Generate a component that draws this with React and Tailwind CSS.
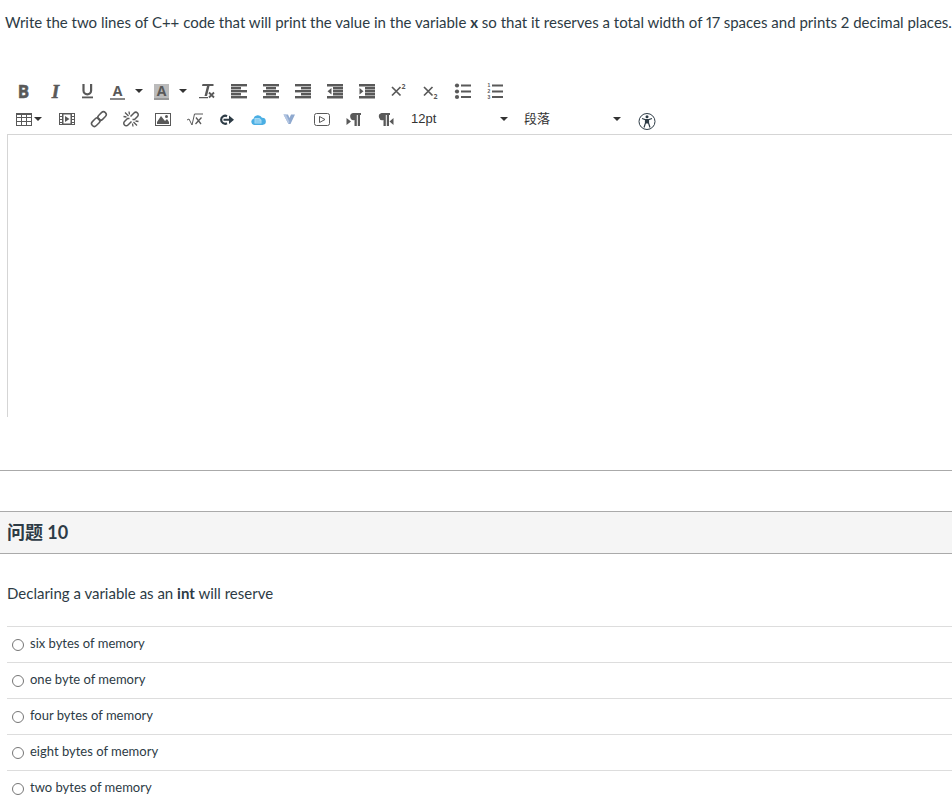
import React, { useState } from 'react';

const answers = [
    'six bytes of memory',
    'one byte of memory',
    'four bytes of memory',
    'eight bytes of memory',
    'two bytes of memory'
];

function Icon({ children }) {
    return (
        <svg viewBox="0 0 16 16" width="16" height="16" fill="#595959" className="shrink-0 overflow-visible" aria-hidden="true">
            {children}
        </svg>
    );
}

function ToolButton({ label, children, width = 'w-8' }) {
    return (
        <button type="button" aria-label={label} title={label} className={`${width} h-7 flex items-center justify-center shrink-0`}>
            {children}
        </button>
    );
}

function Caret() {
    return (
        <svg viewBox="0 0 8 4" width="8" height="4" fill="#333" className="shrink-0" aria-hidden="true">
            <path d="M0 0h8L4 4z" />
        </svg>
    );
}

function ToolSelect({ label, options }) {
    return (
        <div className="relative w-[113px] h-7 shrink-0">
            <select aria-label={label} className="appearance-none w-full h-7 pl-2 text-[13px] text-[#333] bg-transparent font-['Liberation_Sans','Noto_Sans_CJK_SC',sans-serif]">
                {options.map((o) => <option key={o}>{o}</option>)}
            </select>
            <span className="absolute right-2 inset-y-0 flex items-center pointer-events-none"><Caret /></span>
        </div>
    );
}

// each row is [x, width]
function Align({ rows }) {
    return (
        <Icon>
            {rows.map(([x, w], i) => <rect key={i} x={x} y={1 + i * 3} width={w} height="2.4" />)}
        </Icon>
    );
}

function Indent({ arrow }) {
    return (
        <Icon>
            <path d="M0 1h16v2.400H0zM6 4h10v2.400H6zM6 7h10v2.400H6zM6 10h10v2.400H6zM0 13h16v2.400H0z" />
            <path d={arrow} />
        </Icon>
    );
}

function Letter({ children, size = 16, font = 'Open Sans', style = 'normal', x = 8, y = 14 }) {
    return (
        <text x={x} y={y} textAnchor="middle" fontFamily={`'${font}', sans-serif`} fontWeight="700" fontStyle={style} fontSize={size}>{children}</text>
    );
}

function FirstRow() {
    return (
        <div className="flex">
            <ToolButton label="Bold"><Icon><g stroke="#595959" strokeWidth="0.5"><Letter size={17} x={8.5} y={14.5}>B</Letter></g></Icon></ToolButton>
            <ToolButton label="Italic"><Icon><g stroke="#595959" strokeWidth="0.5"><Letter size={19} font="Liberation Serif" style="italic" x={8.5} y={14.5}>I</Letter></g></Icon></ToolButton>
            <ToolButton label="Underline">
                <Icon>
                    <path d="M4.500 1v6.500a3.800 3.800 0 0 0 7.600 0V1" fill="none" stroke="#595959" strokeWidth="2.2" />
                    <rect x="3" y="13.500" width="11" height="1.800" />
                </Icon>
            </ToolButton>
            <ToolButton label="Text color" width="w-7">
                <Icon>
                    <Letter size={14} x={8.5} y={13}>A</Letter>
                    <rect x="1" y="15" width="15" height="2" fill="#888" />
                </Icon>
            </ToolButton>
            <ToolButton label="Text color options" width="w-4"><Caret /></ToolButton>
            <ToolButton label="Background color" width="w-7">
                <Icon>
                    <rect x="1" y="1" width="15" height="16" fill="#bbb" />
                    <Letter size={14} x={8.5} y={13}>A</Letter>
                    <rect x="1" y="15" width="15" height="2" fill="#999" />
                </Icon>
            </ToolButton>
            <ToolButton label="Background color options" width="w-4"><Caret /></ToolButton>
            <ToolButton label="Clear formatting">
                <Icon>
                    <path d="M3.500 1h11v2h-4L8 13H5.500L8 3H3zM0 14h9v1.300H0z" />
                    <path d="M10 9.500l5 5M15 9.500l-5 5" stroke="#595959" strokeWidth="1.800" />
                </Icon>
            </ToolButton>
            <ToolButton label="Align left"><Align rows={[[0, 16], [0, 10], [0, 16], [0, 10], [0, 16]]} /></ToolButton>
            <ToolButton label="Align center"><Align rows={[[0, 16], [3, 10], [0, 16], [3, 10], [0, 16]]} /></ToolButton>
            <ToolButton label="Align right"><Align rows={[[0, 16], [6, 10], [0, 16], [6, 10], [0, 16]]} /></ToolButton>
            <ToolButton label="Decrease indent"><Indent arrow="M4.500 5v6.500L0.500 8.200z" /></ToolButton>
            <ToolButton label="Increase indent"><Indent arrow="M0.500 5v6.500l4-3.300z" /></ToolButton>
            <ToolButton label="Superscript">
                <Icon>
                    <path d="M1 4l8.500 8.500M9.500 4L1 12.500" stroke="#595959" strokeWidth="1.700" />
                    <Letter size={7} x={12.5} y={5.5}>2</Letter>
                </Icon>
            </ToolButton>
            <ToolButton label="Subscript">
                <Icon>
                    <path d="M1 4l8.500 8.500M9.500 4L1 12.500" stroke="#595959" strokeWidth="1.700" />
                    <Letter size={7} x={12.5} y={16}>2</Letter>
                </Icon>
            </ToolButton>
            <ToolButton label="Bullet list">
                <Icon>
                    <circle cx="2" cy="2.500" r="2.100" /><circle cx="2" cy="8.500" r="2.100" /><circle cx="2" cy="14" r="2.100" />
                    <path d="M6 1.500h10v2H6zM6 7.500h10v2H6zM6 13h10v2H6z" />
                </Icon>
            </ToolButton>
            <ToolButton label="Numbered list">
                <Icon>
                    <Letter size={5} font="Liberation Sans" x={2} y={4}>1</Letter>
                    <Letter size={5} font="Liberation Sans" x={2} y={10}>2</Letter>
                    <Letter size={5} font="Liberation Sans" x={2} y={16}>3</Letter>
                    <path d="M5 1.500h11v2H5zM5 7.500h11v2H5zM5 13h11v2H5z" />
                </Icon>
            </ToolButton>
        </div>
    );
}

function SecondRow() {
    return (
        <div className="flex">
            <ToolButton label="Table" width="w-11">
                <Icon>
                    <path fillRule="evenodd" d="M0 2h16v13H0zM1 4v2h4V4zM6 4v2h4V4zM11 4v2h4V4zM1 7v3h4V7zM6 7v3h4V7zM11 7v3h4V7zM1 11v3h4v-3zM6 11v3h4v-3zM11 11v3h4v-3z" />
                </Icon>
                <span className="pl-[2px]"><Caret /></span>
            </ToolButton>
            <ToolButton label="Record media">
                <Icon>
                    <path fillRule="evenodd" d="M0 2h16v12H0zM1 3v2h2V3zM1 6v2h2V6zM1 9v2h2V9zM1 12v1h2v-1zM4.500 3.500v9h7v-9zM13 3v2h2V3zM13 6v2h2V6zM13 9v2h2V9zM13 12v1h2v-1z" />
                    <path d="M6 5l4.500 3L6 11z" />
                </Icon>
            </ToolButton>
            <ToolButton label="Link">
                <Icon>
                    <g fill="none" stroke="#595959" strokeWidth="1.500">
                        <rect x="-4.800" y="-2.800" width="9.600" height="5.600" rx="2.800" transform="translate(11 5) rotate(-45)" />
                        <rect x="-4.800" y="-2.800" width="9.600" height="5.600" rx="2.800" transform="translate(4.800 11.200) rotate(-45)" />
                    </g>
                </Icon>
            </ToolButton>
            <ToolButton label="Remove link">
                <Icon>
                    <g fill="none" stroke="#595959" strokeWidth="1.500">
                        <path d="M7.500 5.500L11 2a2.400 2.400 0 0 1 3.500 3.500L11.500 8.500H9.500M8.500 10.500L5 14a2.400 2.400 0 0 1-3.500-3.500L4.500 7.500H6.500" />
                        <path d="M6 0.500l0.500 3M0.500 5.500l3 .5M2 1.500l3.500 3.500M10 15.500l-0.500-3M15.500 10.500l-3-.5M14 14.500L10.500 11" strokeWidth="1.300" />
                    </g>
                </Icon>
            </ToolButton>
            <ToolButton label="Embed image">
                <Icon>
                    <path fillRule="evenodd" d="M0 2h16v13H0zM1 3v11h14V3z" />
                    <path d="M2 13v-2l4-6 4 5 2-2 2 3v2z" />
                    <circle cx="11.500" cy="5.500" r="1.500" />
                </Icon>
            </ToolButton>
            <ToolButton label="Insert math equation">
                <Icon>
                    <path d="M0 9l2-1 3 6L7.500 3H16" fill="none" stroke="#595959" />
                    <path d="M9 6.500l5 6.500M14.500 6.500l-6 6.500" fill="none" stroke="#595959" strokeWidth="1.300" />
                </Icon>
            </ToolButton>
            <ToolButton label="External tool">
                <Icon>
                    <path d="M8 5.200A4 4 0 1 0 8 12.300" fill="none" stroke="#2d3b45" strokeWidth="2.200" />
                    <path d="M4.500 7.800H10V4.500l5 4.200-5 4.200V9.800H4.500z" fill="#2d3b45" />
                </Icon>
            </ToolButton>
            <ToolButton label="Cloud files">
                <Icon>
                    <path d="M3 14a3.200 3.200 0 0 1-.5-6.200 4.500 4.500 0 0 1 8.500-1 3.500 3.500 0 0 1 .5 7.200z" fill="#4aaee3" />
                    <path d="M3.500 7h5l2 2v3.500h-7z" fill="#a5daf5" />
                    <path d="M4.500 9h4M4.500 11h5" stroke="#6bbde8" strokeWidth="0.800" />
                </Icon>
            </ToolButton>
            <ToolButton label="Video library">
                <Icon>
                    <path d="M0.500 3.500H5L6.500 7 8 3.500h4L7.500 13h-2z" fill="#8fa9cf" />
                    <path d="M0.500 3.500H3L6.500 11l-1 2z" fill="#b4c6e2" />
                </Icon>
            </ToolButton>
            <ToolButton label="Embed video">
                <Icon>
                    <rect x="-0.500" y="2.500" width="15" height="12" rx="2" fill="none" stroke="#595959" />
                    <path d="M4.500 5.500v6L10 8.500z" fill="none" stroke="#595959" />
                </Icon>
            </ToolButton>
            <ToolButton label="Left to right">
                <Icon>
                    <path d="M6 2h8v2h-1v11h-2.200V4h-1v11H7.500V9a3.500 3.500 0 0 1-1.500-7zM-0.500 7l4.500 3.500L-0.500 14z" />
                </Icon>
            </ToolButton>
            <ToolButton label="Right to left">
                <Icon>
                    <path d="M2.500 2H11v2h-1v11H7.800V4h-1v11H4.500V9a3.500 3.500 0 0 1-2-7zM14.500 7v7L10.500 10.500z" />
                </Icon>
            </ToolButton>
            <ToolSelect label="Font size" options={['12pt', '8pt', '10pt', '14pt', '18pt', '24pt', '36pt']} />
            <ToolSelect label="Block format" options={['段落', '标题 2', '标题 3', '标题 4', '预格式化']} />
            <ToolButton label="Check accessibility" width="w-9">
                <svg viewBox="0 0 18 18" width="18" height="18" className="shrink-0 mt-1" aria-hidden="true">
                    <circle cx="9" cy="9.500" r="8" fill="none" stroke="#2d3b45" />
                    <circle cx="9" cy="4.700" r="1.500" fill="#2d3b45" />
                    <path d="M4 6.500l3.500 1.200v3.300L6 15.500M14 6.500l-3.500 1.200v3.300l1.500 4.500" fill="none" stroke="#2d3b45" strokeWidth="1.200" />
                    <path d="M7.500 7h3v4.500h-3z" fill="#2d3b45" />
                </svg>
            </ToolButton>
        </div>
    );
}

export default function App() {
    const [essay, setEssay] = useState('');
    const [selected, setSelected] = useState(null);

    return (
        <div className="bg-white text-[#2d3b45] overflow-x-hidden font-[Lato,'Noto_Sans_CJK_SC',sans-serif]">
            <section className="pt-[10px] pb-[53px] border-b border-[#aaa]">
                <p className="pl-[5px] text-[15px] leading-6 whitespace-nowrap proportional-nums">
                    Write the two lines of C++ code that will print the value in the variable <strong>x</strong> so that it reserves a total width of 17 spaces and prints 2 decimal places.
                </p>
                <div className="pl-[7px]">
                    <div className="pt-[43px] pb-px">
                        <FirstRow />
                        <SecondRow />
                    </div>
                    <textarea
                        aria-label="Answer"
                        value={essay}
                        onChange={(e) => setEssay(e.target.value)}
                        className="block w-full h-[283px] p-2 border-l border-t border-[#d5d5d5] resize-none outline-none"
                    />
                </div>
            </section>

            <section className="mt-10">
                <header className="bg-[#f5f5f5] border-y border-[#aaa] px-[7px] pb-[2px] h-[43px] flex items-center">
                    <h2 className="text-lg leading-6 font-bold">问题 10</h2>
                </header>
                <div className="pl-[7px] pt-[27px]">
                    <p className="text-[15px] leading-6">
                        Declaring a variable as an <strong>int</strong> will reserve
                    </p>
                    <div className="pt-[21px]">
                        {answers.map((answer, i) => (
                            <label key={answer} className="flex items-center h-9 pl-[5px] pb-px gap-[6px] border-t border-[#ddd] text-[13px]">
                                <input
                                    type="radio"
                                    name="question-10"
                                    checked={selected === i}
                                    onChange={() => setSelected(i)}
                                    className="appearance-none size-3 mt-px rounded-full border border-[#767676] bg-white checked:border-4"
                                />
                                {answer}
                            </label>
                        ))}
                    </div>
                </div>
            </section>
        </div>
    );
}
